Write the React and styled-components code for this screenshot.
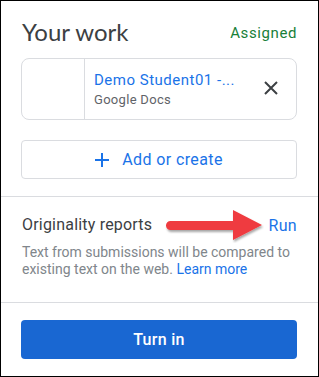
import React from "react";
import styled, { createGlobalStyle } from "styled-components";

const GlobalStyle = createGlobalStyle`
  body {
    margin: 0;
    background: #fff;
    font-family: Roboto, "Liberation Sans", sans-serif;
  }
`;

const Panel = styled.div`
  width: 319px;
  height: 377px;
  box-sizing: border-box;
  border: 1px solid #000;
  background: #fff;
  display: flex;
  flex-direction: column;
`;

const Section = styled.div`
  padding: 0 21px 0 20px;
  border-bottom: ${(p) => (p.$divider ? "1px solid #dadce0" : "none")};
`;

const HeaderRow = styled.div`
  display: flex;
  justify-content: space-between;
  align-items: center;
  padding-top: 16px;
`;

const Title = styled.h2`
  margin: 0;
  font-family: Lato, "Open Sans", sans-serif;
  font-weight: 400;
  font-size: 24px;
  line-height: 30px;
  color: #3c4043;
  padding-left: 1px;
`;

const Status = styled.span`
  font-size: 15px;
  font-weight: 400;
  color: #188038;
  letter-spacing: 0.6px;
  margin-top: 2px;
`;

const FileCard = styled.div`
  margin-top: 11px;
  height: 62px;
  box-sizing: border-box;
  border: 1px solid #dadce0;
  border-radius: 8px;
  display: flex;
  align-items: stretch;
  overflow: hidden;
`;

const Thumb = styled.div`
  width: 62px;
  border-right: 1px solid #dadce0;
`;

const FileInfo = styled.div`
  flex: 1;
  min-width: 0;
  padding: 12px 0 0 9px;
`;

const FileName = styled.div`
  font-size: 15px;
  font-weight: 400;
  color: #1a73e8;
  letter-spacing: 0.5px;
  white-space: nowrap;
  line-height: 18px;
`;

const FileType = styled.div`
  font-size: 13px;
  color: #5f6368;
  line-height: 16px;
  margin-top: 3px;
  letter-spacing: 0.3px;
`;

const IconButton = styled.button`
  width: 50px;
  border: none;
  background: none;
  padding: 0 0 2px;
  display: flex;
  align-items: center;
  justify-content: center;
`;

const AddButton = styled.button`
  margin: 20px 0 17px;
  width: 100%;
  height: 39px;
  box-sizing: border-box;
  border: 1px solid #dadce0;
  border-radius: 4px;
  background: #fff;
  display: flex;
  align-items: center;
  justify-content: center;
  gap: 13px;
  font-family: Roboto, sans-serif;
  font-size: 16px;
  font-weight: 400;
  color: #1a73e8;
  letter-spacing: 0.4px;
  padding: 0;
`;

const ReportRow = styled.div`
  display: flex;
  align-items: center;
  justify-content: space-between;
  margin-top: 10px;
  height: 36px;
`;

const ReportLabel = styled.span`
  font-size: 16px;
  line-height: 20px;
  color: #3c4043;
  letter-spacing: 0.2px;
  padding-left: 1px;
`;

const RunLink = styled.span`
  display: flex;
  align-items: center;
  gap: 5px;
  font-size: 16px;
  font-weight: 400;
  color: #1a73e8;
  letter-spacing: 0.3px;
`;

const Note = styled.p`
  margin: 1px 0 0;
  padding: 0 0 24px 1px;
  font-size: 14px;
  line-height: 17px;
  color: #80868b;
  letter-spacing: 0;
`;

const Link = styled.span`
  color: #1a73e8;
`;

const TurnIn = styled.button`
  margin-top: 17px;
  width: 100%;
  height: 39px;
  border: none;
  border-radius: 4px;
  background: #1967d2;
  color: #fff;
  font-family: Roboto, sans-serif;
  font-size: 16px;
  font-weight: 500;
  letter-spacing: 0.3px;
`;

const Arrow = () => (
  <svg width="100" height="36" viewBox="0 0 100 36">
    <defs>
      <filter id="sh" x="-10%" y="-20%" width="130%" height="160%">
        <feDropShadow dx="1" dy="2" stdDeviation="1.2" floodColor="#000" floodOpacity="0.35" />
      </filter>
    </defs>
    <path
      d="M6.5 14 H69 V3 L98 18 L69 33 V23 H6.5 A4.5 4.5 0 0 1 6.5 14 Z"
      fill="#ef3b3f"
      filter="url(#sh)"
    />
  </svg>
);

export default function App() {
  return (
    <>
      <GlobalStyle />
      <Panel>
        <Section $divider>
          <HeaderRow>
            <Title>Your work</Title>
            <Status>Assigned</Status>
          </HeaderRow>
          <FileCard>
            <Thumb />
            <FileInfo>
              <FileName>Demo Student01 -...</FileName>
              <FileType>Google Docs</FileType>
            </FileInfo>
            <IconButton aria-label="Remove">
              <svg width="14" height="14" viewBox="0 0 14 14">
                <path d="M1 1 L13 13 M13 1 L1 13" stroke="#3c4043" strokeWidth="2" />
              </svg>
            </IconButton>
          </FileCard>
          <AddButton>
            <svg width="14" height="14" viewBox="0 0 14 14">
              <path d="M7 0 V14 M0 7 H14" stroke="#1a73e8" strokeWidth="2" />
            </svg>
            Add or create
          </AddButton>
        </Section>
        <Section $divider>
          <ReportRow>
            <ReportLabel>Originality reports</ReportLabel>
            <RunLink>
              <Arrow />
              Run
            </RunLink>
          </ReportRow>
          <Note>
            Text from submissions will be compared to existing text on the web.{" "}
            <Link>Learn more</Link>
          </Note>
        </Section>
        <Section>
          <TurnIn>Turn in</TurnIn>
        </Section>
      </Panel>
    </>
  );
}
